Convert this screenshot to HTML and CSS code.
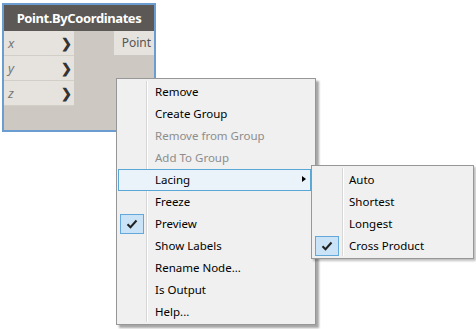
FILE: index.html
```html
<!DOCTYPE html>
<html lang="en">
<head>
  <meta charset="UTF-8" />
  <title>Point.ByCoordinates</title>
  <link rel="stylesheet" href="styles.css">
</head>
<body>
  <div class="node">
    <div class="node-title">Point.ByCoordinates</div>
    <div class="node-body">
      <div class="inputs">
        <div class="port"><span class="port-name">x</span><span class="chev">&#x276F;</span></div>
        <div class="port"><span class="port-name">y</span><span class="chev">&#x276F;</span></div>
        <div class="port"><span class="port-name">z</span><span class="chev">&#x276F;</span></div>
      </div>
      <div class="outputs">
        <div class="out-port">Point</div>
      </div>
    </div>
  </div>

  <div class="menu main-menu">
    <div class="gutter"></div>
    <div class="item">Remove</div>
    <div class="item">Create Group</div>
    <div class="item disabled">Remove from Group</div>
    <div class="item disabled">Add To Group</div>
    <div class="item active">Lacing<span class="arrow"></span></div>
    <div class="item">Freeze</div>
    <div class="item checked"><span class="check"><svg width="12" height="10" viewBox="0 0 12 10"><path d="M1.5 5.2 L4.5 8.2 L10.5 1.5" fill="none" stroke="#222" stroke-width="2"/></svg></span>Preview</div>
    <div class="item">Show Labels</div>
    <div class="item">Rename Node...</div>
    <div class="item">Is Output</div>
    <div class="item">Help...</div>
  </div>

  <div class="menu sub-menu">
    <div class="gutter"></div>
    <div class="item">Auto</div>
    <div class="item">Shortest</div>
    <div class="item">Longest</div>
    <div class="item checked"><span class="check"><svg width="12" height="10" viewBox="0 0 12 10"><path d="M1.5 5.2 L4.5 8.2 L10.5 1.5" fill="none" stroke="#222" stroke-width="2"/></svg></span>Cross Product</div>
  </div>
</body>
</html>
```

FILE: styles.css
```css
body {
  margin: 0;
  background: #fff;
  font-family: "Noto Sans", "Open Sans", sans-serif;
  font-size: 11.5px;
  color: #000;
}
.node {
  margin: 3px 0 0 2px;
  width: 150px;
  border: 2px solid #6b9dd1;
  background: #cdc9c2;
}
.node-title {
  height: 26px;
  background: #5b5855;
  color: #fff;
  font-weight: bold;
  font-size: 13px;
  letter-spacing: -0.4px;
  text-align: center;
  line-height: 26px;
}
.node-body {
  display: flex;
  justify-content: space-between;
  height: 99px;
}
.inputs {
  width: 70px;
}
.port {
  height: 24px;
  background: #e6e3de;
  border-bottom: 1px solid #d2cfc9;
  display: flex;
  align-items: center;
  justify-content: space-between;
  padding: 0 2px 0 4px;
}
.port-name {
  font-style: italic;
  color: #777;
  font-size: 13px;
}
.chev {
  color: #333;
  font-size: 13px;
  font-weight: bold;
}
.out-port {
  width: 40px;
  height: 24px;
  line-height: 24px;
  background: #e6e3de;
  color: #555;
  font-size: 12px;
  text-align: right;
  padding-right: 3px;
  box-sizing: border-box;
}
.menu {
  position: absolute;
  background: #f0f0f0;
  border: 1px solid #979797;
  box-shadow: 3px 3px 2px rgba(0, 0, 0, 0.35);
  padding: 2px 0;
  box-sizing: border-box;
}
.main-menu {
  left: 116px;
  top: 78px;
  width: 200px;
  height: 247px;
}
.sub-menu {
  left: 311px;
  top: 165px;
  width: 163px;
  padding: 3px 0 1px;
  box-shadow: 2px 2px 2px rgba(0, 0, 0, 0.25);
}
.gutter {
  position: absolute;
  top: 2px;
  bottom: 2px;
  left: 29px;
  width: 1px;
  background: #d7d7d7;
  border-right: 1px solid #fff;
}
.sub-menu .gutter {
  left: 30px;
}
.item {
  position: relative;
  height: 22px;
  line-height: 22px;
  padding-left: 37px;
  margin: 0 4px 0 1px;
  box-sizing: border-box;
}
.sub-menu .item {
  padding-left: 36px;
}
.disabled {
  color: #8d8d8d;
}
.active {
  background: #e9f3f9;
  border: 1px solid #5aa7d6;
  line-height: 20px;
  padding-left: 36px;
}
.arrow {
  position: absolute;
  right: 4px;
  top: 6px;
  border-left: 4px solid #000;
  border-top: 3.5px solid transparent;
  border-bottom: 3.5px solid transparent;
}
.check {
  position: absolute;
  left: 2px;
  top: 1px;
  width: 24px;
  height: 20px;
  box-sizing: border-box;
  background: #cae3f6;
  border: 1px solid #64a8da;
  display: flex;
  align-items: center;
  justify-content: center;
}
```
